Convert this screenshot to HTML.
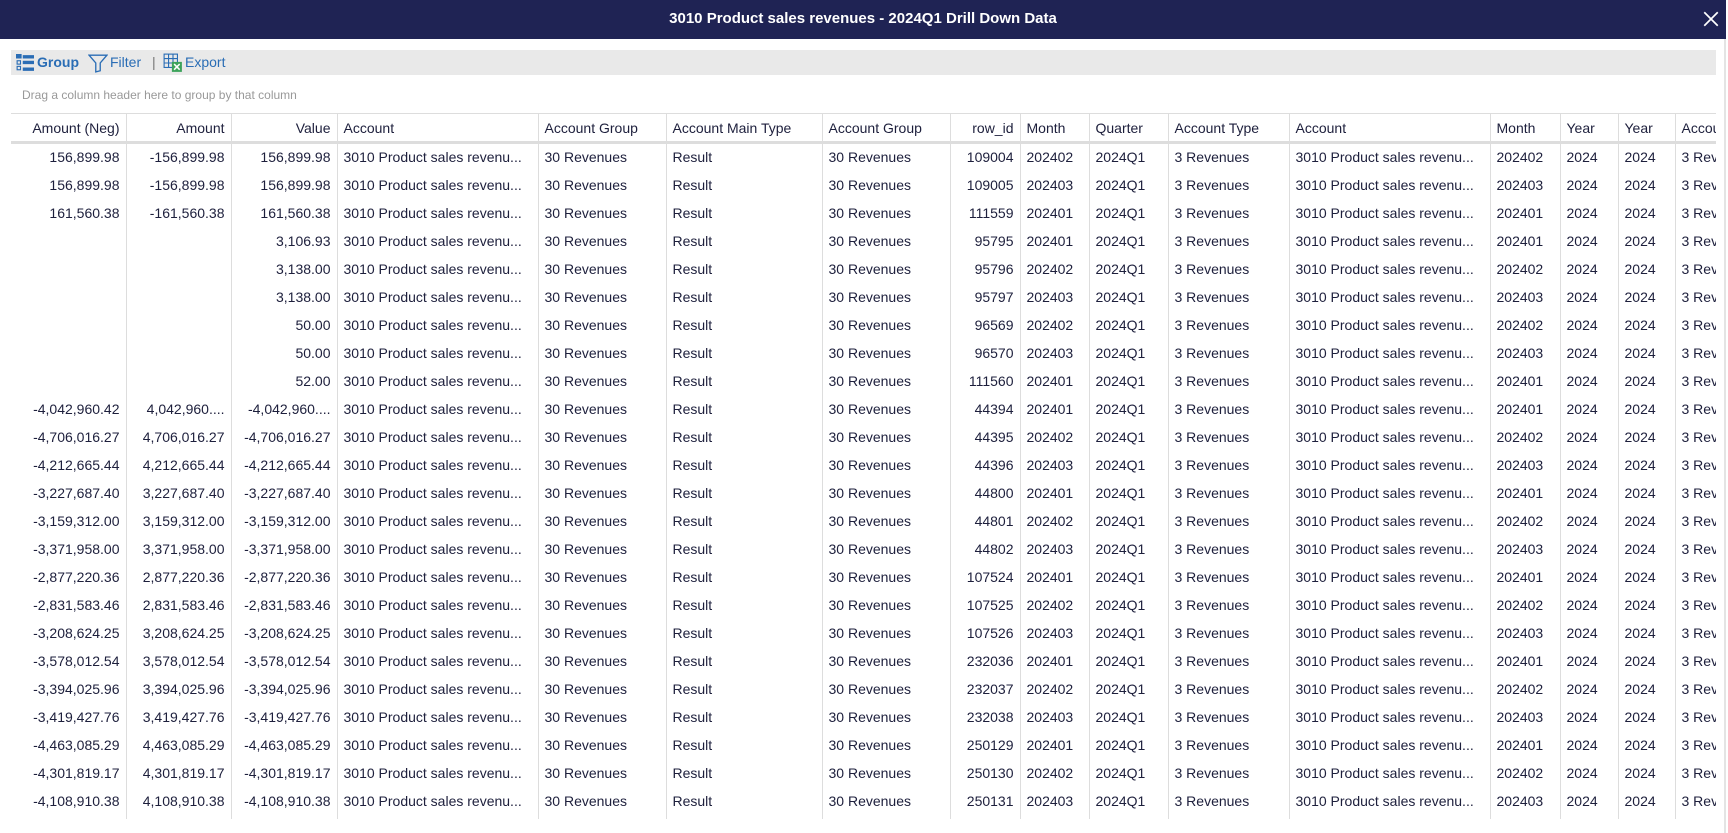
<!DOCTYPE html>
<html><head><meta charset="utf-8"><style>
*{margin:0;padding:0;box-sizing:border-box}
body{width:1728px;height:833px;overflow:hidden;background:#fff;font-family:"Liberation Sans",sans-serif;color:#1d1f3c;position:relative}
.title{position:absolute;left:0;top:0;width:1726px;height:39px;background:#1f2354;color:#fff;font-weight:bold;font-size:15px;text-align:center;line-height:37px}
.close{position:absolute;left:1702px;top:10px}
.rb{position:absolute;left:1724px;top:39px;width:2px;height:794px;background:#e4e4e4}
.tb{position:absolute;left:11px;top:50px;width:1705px;height:25px;background:#e9e9e9;font-size:14px;color:#2a6db5;line-height:25px}
.tb span{position:absolute;top:0}
.hint{position:absolute;left:22px;top:88px;font-size:12px;color:#999}
.grid{position:absolute;left:11px;top:113px;width:1705px;height:706px;overflow:hidden}
table{border-collapse:collapse;table-layout:fixed;width:1780px;font-size:14px}
th{font-weight:normal;height:29px;border-top:1px solid #ddd;border-bottom:3px solid #ddd;border-left:1px solid #ddd;text-align:left;padding:0 6px;white-space:nowrap;overflow:hidden}
td{height:28px;border-left:1px solid #ddd;padding:0 6px;white-space:nowrap;overflow:hidden}
th:first-child,td:first-child{border-left:none}
.r{text-align:right}
tr.f td{height:17px}
</style></head><body>
<div class="title">3010 Product sales revenues - 2024Q1 Drill Down Data
<svg class="close" width="18" height="18" viewBox="0 0 16 16"><path d="M2 2L14 14M14 2L2 14" stroke="#fff" stroke-width="1.5"/></svg></div>
<div class="rb"></div>
<div class="tb">
<svg style="position:absolute;left:5px;top:4px" width="18" height="18" viewBox="0 0 16 16"><g fill="#2a6db5"><rect x="0" y="0" width="5" height="4"/><rect x="6" y="1" width="10" height="3"/><rect x="1" y="6" width="3" height="3" fill="none" stroke="#2a6db5"/><rect x="6" y="6" width="10" height="3"/><rect x="1" y="11" width="3" height="3" fill="none" stroke="#2a6db5"/><rect x="6" y="12" width="10" height="3"/></g></svg>
<span style="left:26px;font-weight:bold">Group</span>
<svg style="position:absolute;left:77px;top:3px" width="20" height="20" viewBox="0 0 18 18"><path d="M1 2H17L11 9V16L7 17V9Z" fill="none" stroke="#2a6db5" stroke-width="1.2"/></svg>
<span style="left:99px">Filter</span>
<span style="left:141px;color:#777">|</span>
<svg style="position:absolute;left:152px;top:3px" width="20" height="20" viewBox="0 0 18 18"><g fill="none" stroke="#2a6db5"><rect x="1" y="1" width="12" height="12"/><path d="M1 5H13M1 9H13M5 1V13M9 1V13"/></g><rect x="8" y="8" width="9" height="9" fill="#3ca35a"/><path d="M10 10L15 15M15 10L10 15" stroke="#fff" stroke-width="1.4"/></svg>
<span style="left:174px">Export</span>
</div>
<div class="hint">Drag a column header here to group by that column</div>
<div class="grid"><table>
<colgroup><col style="width:115px"><col style="width:105px"><col style="width:106px"><col style="width:201px"><col style="width:128px"><col style="width:156px"><col style="width:128px"><col style="width:70px"><col style="width:69px"><col style="width:79px"><col style="width:121px"><col style="width:201px"><col style="width:70px"><col style="width:58px"><col style="width:57px"><col style="width:116px"></colgroup>
<tr><th class="r">Amount (Neg)</th><th class="r">Amount</th><th class="r">Value</th><th>Account</th><th>Account Group</th><th>Account Main Type</th><th>Account Group</th><th class="r">row_id</th><th>Month</th><th>Quarter</th><th>Account Type</th><th>Account</th><th>Month</th><th>Year</th><th>Year</th><th>Account</th></tr>
<tr><td class="r">156,899.98</td><td class="r">-156,899.98</td><td class="r">156,899.98</td><td>3010 Product sales revenu...</td><td>30 Revenues</td><td>Result</td><td>30 Revenues</td><td class="r">109004</td><td>202402</td><td>2024Q1</td><td>3 Revenues</td><td>3010 Product sales revenu...</td><td>202402</td><td>2024</td><td>2024</td><td>3 Revenues</td></tr>
<tr><td class="r">156,899.98</td><td class="r">-156,899.98</td><td class="r">156,899.98</td><td>3010 Product sales revenu...</td><td>30 Revenues</td><td>Result</td><td>30 Revenues</td><td class="r">109005</td><td>202403</td><td>2024Q1</td><td>3 Revenues</td><td>3010 Product sales revenu...</td><td>202403</td><td>2024</td><td>2024</td><td>3 Revenues</td></tr>
<tr><td class="r">161,560.38</td><td class="r">-161,560.38</td><td class="r">161,560.38</td><td>3010 Product sales revenu...</td><td>30 Revenues</td><td>Result</td><td>30 Revenues</td><td class="r">111559</td><td>202401</td><td>2024Q1</td><td>3 Revenues</td><td>3010 Product sales revenu...</td><td>202401</td><td>2024</td><td>2024</td><td>3 Revenues</td></tr>
<tr><td></td><td></td><td class="r">3,106.93</td><td>3010 Product sales revenu...</td><td>30 Revenues</td><td>Result</td><td>30 Revenues</td><td class="r">95795</td><td>202401</td><td>2024Q1</td><td>3 Revenues</td><td>3010 Product sales revenu...</td><td>202401</td><td>2024</td><td>2024</td><td>3 Revenues</td></tr>
<tr><td></td><td></td><td class="r">3,138.00</td><td>3010 Product sales revenu...</td><td>30 Revenues</td><td>Result</td><td>30 Revenues</td><td class="r">95796</td><td>202402</td><td>2024Q1</td><td>3 Revenues</td><td>3010 Product sales revenu...</td><td>202402</td><td>2024</td><td>2024</td><td>3 Revenues</td></tr>
<tr><td></td><td></td><td class="r">3,138.00</td><td>3010 Product sales revenu...</td><td>30 Revenues</td><td>Result</td><td>30 Revenues</td><td class="r">95797</td><td>202403</td><td>2024Q1</td><td>3 Revenues</td><td>3010 Product sales revenu...</td><td>202403</td><td>2024</td><td>2024</td><td>3 Revenues</td></tr>
<tr><td></td><td></td><td class="r">50.00</td><td>3010 Product sales revenu...</td><td>30 Revenues</td><td>Result</td><td>30 Revenues</td><td class="r">96569</td><td>202402</td><td>2024Q1</td><td>3 Revenues</td><td>3010 Product sales revenu...</td><td>202402</td><td>2024</td><td>2024</td><td>3 Revenues</td></tr>
<tr><td></td><td></td><td class="r">50.00</td><td>3010 Product sales revenu...</td><td>30 Revenues</td><td>Result</td><td>30 Revenues</td><td class="r">96570</td><td>202403</td><td>2024Q1</td><td>3 Revenues</td><td>3010 Product sales revenu...</td><td>202403</td><td>2024</td><td>2024</td><td>3 Revenues</td></tr>
<tr><td></td><td></td><td class="r">52.00</td><td>3010 Product sales revenu...</td><td>30 Revenues</td><td>Result</td><td>30 Revenues</td><td class="r">111560</td><td>202401</td><td>2024Q1</td><td>3 Revenues</td><td>3010 Product sales revenu...</td><td>202401</td><td>2024</td><td>2024</td><td>3 Revenues</td></tr>
<tr><td class="r">-4,042,960.42</td><td class="r">4,042,960....</td><td class="r">-4,042,960....</td><td>3010 Product sales revenu...</td><td>30 Revenues</td><td>Result</td><td>30 Revenues</td><td class="r">44394</td><td>202401</td><td>2024Q1</td><td>3 Revenues</td><td>3010 Product sales revenu...</td><td>202401</td><td>2024</td><td>2024</td><td>3 Revenues</td></tr>
<tr><td class="r">-4,706,016.27</td><td class="r">4,706,016.27</td><td class="r">-4,706,016.27</td><td>3010 Product sales revenu...</td><td>30 Revenues</td><td>Result</td><td>30 Revenues</td><td class="r">44395</td><td>202402</td><td>2024Q1</td><td>3 Revenues</td><td>3010 Product sales revenu...</td><td>202402</td><td>2024</td><td>2024</td><td>3 Revenues</td></tr>
<tr><td class="r">-4,212,665.44</td><td class="r">4,212,665.44</td><td class="r">-4,212,665.44</td><td>3010 Product sales revenu...</td><td>30 Revenues</td><td>Result</td><td>30 Revenues</td><td class="r">44396</td><td>202403</td><td>2024Q1</td><td>3 Revenues</td><td>3010 Product sales revenu...</td><td>202403</td><td>2024</td><td>2024</td><td>3 Revenues</td></tr>
<tr><td class="r">-3,227,687.40</td><td class="r">3,227,687.40</td><td class="r">-3,227,687.40</td><td>3010 Product sales revenu...</td><td>30 Revenues</td><td>Result</td><td>30 Revenues</td><td class="r">44800</td><td>202401</td><td>2024Q1</td><td>3 Revenues</td><td>3010 Product sales revenu...</td><td>202401</td><td>2024</td><td>2024</td><td>3 Revenues</td></tr>
<tr><td class="r">-3,159,312.00</td><td class="r">3,159,312.00</td><td class="r">-3,159,312.00</td><td>3010 Product sales revenu...</td><td>30 Revenues</td><td>Result</td><td>30 Revenues</td><td class="r">44801</td><td>202402</td><td>2024Q1</td><td>3 Revenues</td><td>3010 Product sales revenu...</td><td>202402</td><td>2024</td><td>2024</td><td>3 Revenues</td></tr>
<tr><td class="r">-3,371,958.00</td><td class="r">3,371,958.00</td><td class="r">-3,371,958.00</td><td>3010 Product sales revenu...</td><td>30 Revenues</td><td>Result</td><td>30 Revenues</td><td class="r">44802</td><td>202403</td><td>2024Q1</td><td>3 Revenues</td><td>3010 Product sales revenu...</td><td>202403</td><td>2024</td><td>2024</td><td>3 Revenues</td></tr>
<tr><td class="r">-2,877,220.36</td><td class="r">2,877,220.36</td><td class="r">-2,877,220.36</td><td>3010 Product sales revenu...</td><td>30 Revenues</td><td>Result</td><td>30 Revenues</td><td class="r">107524</td><td>202401</td><td>2024Q1</td><td>3 Revenues</td><td>3010 Product sales revenu...</td><td>202401</td><td>2024</td><td>2024</td><td>3 Revenues</td></tr>
<tr><td class="r">-2,831,583.46</td><td class="r">2,831,583.46</td><td class="r">-2,831,583.46</td><td>3010 Product sales revenu...</td><td>30 Revenues</td><td>Result</td><td>30 Revenues</td><td class="r">107525</td><td>202402</td><td>2024Q1</td><td>3 Revenues</td><td>3010 Product sales revenu...</td><td>202402</td><td>2024</td><td>2024</td><td>3 Revenues</td></tr>
<tr><td class="r">-3,208,624.25</td><td class="r">3,208,624.25</td><td class="r">-3,208,624.25</td><td>3010 Product sales revenu...</td><td>30 Revenues</td><td>Result</td><td>30 Revenues</td><td class="r">107526</td><td>202403</td><td>2024Q1</td><td>3 Revenues</td><td>3010 Product sales revenu...</td><td>202403</td><td>2024</td><td>2024</td><td>3 Revenues</td></tr>
<tr><td class="r">-3,578,012.54</td><td class="r">3,578,012.54</td><td class="r">-3,578,012.54</td><td>3010 Product sales revenu...</td><td>30 Revenues</td><td>Result</td><td>30 Revenues</td><td class="r">232036</td><td>202401</td><td>2024Q1</td><td>3 Revenues</td><td>3010 Product sales revenu...</td><td>202401</td><td>2024</td><td>2024</td><td>3 Revenues</td></tr>
<tr><td class="r">-3,394,025.96</td><td class="r">3,394,025.96</td><td class="r">-3,394,025.96</td><td>3010 Product sales revenu...</td><td>30 Revenues</td><td>Result</td><td>30 Revenues</td><td class="r">232037</td><td>202402</td><td>2024Q1</td><td>3 Revenues</td><td>3010 Product sales revenu...</td><td>202402</td><td>2024</td><td>2024</td><td>3 Revenues</td></tr>
<tr><td class="r">-3,419,427.76</td><td class="r">3,419,427.76</td><td class="r">-3,419,427.76</td><td>3010 Product sales revenu...</td><td>30 Revenues</td><td>Result</td><td>30 Revenues</td><td class="r">232038</td><td>202403</td><td>2024Q1</td><td>3 Revenues</td><td>3010 Product sales revenu...</td><td>202403</td><td>2024</td><td>2024</td><td>3 Revenues</td></tr>
<tr><td class="r">-4,463,085.29</td><td class="r">4,463,085.29</td><td class="r">-4,463,085.29</td><td>3010 Product sales revenu...</td><td>30 Revenues</td><td>Result</td><td>30 Revenues</td><td class="r">250129</td><td>202401</td><td>2024Q1</td><td>3 Revenues</td><td>3010 Product sales revenu...</td><td>202401</td><td>2024</td><td>2024</td><td>3 Revenues</td></tr>
<tr><td class="r">-4,301,819.17</td><td class="r">4,301,819.17</td><td class="r">-4,301,819.17</td><td>3010 Product sales revenu...</td><td>30 Revenues</td><td>Result</td><td>30 Revenues</td><td class="r">250130</td><td>202402</td><td>2024Q1</td><td>3 Revenues</td><td>3010 Product sales revenu...</td><td>202402</td><td>2024</td><td>2024</td><td>3 Revenues</td></tr>
<tr><td class="r">-4,108,910.38</td><td class="r">4,108,910.38</td><td class="r">-4,108,910.38</td><td>3010 Product sales revenu...</td><td>30 Revenues</td><td>Result</td><td>30 Revenues</td><td class="r">250131</td><td>202403</td><td>2024Q1</td><td>3 Revenues</td><td>3010 Product sales revenu...</td><td>202403</td><td>2024</td><td>2024</td><td>3 Revenues</td></tr>
<tr class="f"><td></td><td></td><td></td><td></td><td></td><td></td><td></td><td></td><td></td><td></td><td></td><td></td><td></td><td></td><td></td><td></td></tr>
</table></div>
</body></html>
